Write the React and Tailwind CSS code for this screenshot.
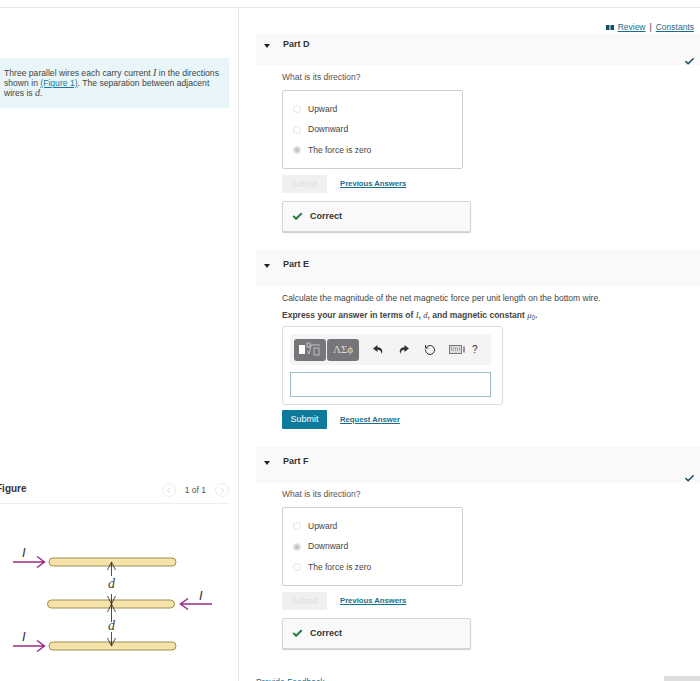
import { Check, ChevronLeft, ChevronRight, RotateCw } from 'lucide-react'

const sans = { fontFamily: '"Liberation Sans", Arial, sans-serif' }
const serif = { fontFamily: '"Liberation Serif", serif' }

function PartHeader({ label, className, check }) {
  return (
    <div className={`relative flex shrink-0 bg-[#f9f9f9] pl-[8px] ${className}`}>
      <span className="mt-[6px] h-0 w-0 border-x-[3.5px] border-t-[4px] border-x-transparent border-t-[#222]" />
      <span className="ml-[13px] text-[9px] leading-[12px] font-bold text-[#333]">{label}</span>
      {check && <Check size={11} strokeWidth={3.5} className={`absolute right-[5px] text-[#14506a] ${check}`} />}
    </div>
  )
}

function Radio({ label, selected }) {
  return (
    <div className="flex h-[20.5px] items-center">
      <span className={`flex h-[8px] w-[8px] items-center justify-center rounded-full border border-[#e6e6e6] ${selected ? 'bg-[#dcdcdc]' : 'bg-white'}`}>
        {selected && <span className="h-[4px] w-[4px] rounded-full bg-[#c4c4c4]" />}
      </span>
      <span className="ml-[7px] text-[8.5px] text-[#444]">{label}</span>
    </div>
  )
}

function MultipleChoice({ options, selected }) {
  return (
    <>
      <div className="text-[8.5px] leading-[12px] text-[#555]">What is its direction?</div>
      <div className="mt-[7px] flex h-[79px] w-[181px] flex-col justify-center rounded-[2px] border border-[#cfcfcf] pl-[10px]">
        {options.map(o => (
          <Radio key={o} label={o} selected={o === selected} />
        ))}
      </div>
      <div className="mt-[6px] flex items-center">
        <div className="flex h-[18px] w-[45px] items-center justify-center bg-[#f0f0f0] text-[8.5px] text-[#e0e0e0]">Submit</div>
        <a className="ml-[13px] text-[7.7px] font-bold text-[#1b6d8c] underline">Previous Answers</a>
      </div>
      <div className="mt-[8px] flex h-[31px] w-[189px] items-center rounded-[2px] border border-[#d6d6d6] bg-[#f9f9f9] pl-[9px] shadow-[0_1px_1px_#ccc]">
        <Check size={11} strokeWidth={4.5} className="text-[#2b8048]" />
        <span className="ml-[7px] text-[9px] font-bold text-[#333]">Correct</span>
      </div>
    </>
  )
}

function WireFigure() {
  return (
    <svg width="238" height="171" viewBox="0 0 238 171" className="mt-[6px] block shrink-0">
      <g fill="#f6e3aa" stroke="#a08c52" strokeWidth="1">
        <rect x="49" y="48" width="127" height="8" rx="4" />
        <rect x="47.5" y="90" width="127" height="8" rx="4" />
        <rect x="49" y="132" width="127" height="8" rx="4" />
      </g>
      <g fill="none" stroke="#9c2a8a" strokeWidth="1.5">
        <path d="M13 52H44M37 46.5L44.5 52L37 57.5" />
        <path d="M13 136H44M37 130.5L44.5 136L37 141.5" />
        <path d="M212 94H181M188 88.5L180.5 94L188 99.5" />
      </g>
      <g fill="none" stroke="#222" strokeWidth="0.8">
        <path d="M111.5 52V66M107.5 60L111.5 52L115.5 60" />
        <path d="M111.5 84V112M107.5 86L111.5 94L115.5 86M107.5 102L111.5 94L115.5 102" />
        <path d="M111.5 122V136M107.5 128L111.5 136L115.5 128" />
      </g>
      <g fontFamily='"Liberation Serif", serif' fontStyle="italic" fill="#444" fontSize="14">
        <text x="108" y="78">d</text>
        <text x="108" y="120">d</text>
      </g>
      <g fontFamily='"Liberation Sans", sans-serif' fontStyle="italic" fill="#333" fontSize="13">
        <text x="22" y="47">I</text>
        <text x="22" y="131">I</text>
        <text x="199" y="90">I</text>
      </g>
    </svg>
  )
}

function EditorToolbar() {
  return (
    <div className="flex h-[31px] items-center rounded-[3px] bg-[#f4f4f4] pl-[4px] text-[#333]">
      <div className="flex h-[22px] w-[32px] items-center justify-center gap-[1px] rounded-[3px] bg-[#76767a]">
        <span className="h-[9px] w-[6px] bg-white" />
        <svg width="15" height="15" viewBox="0 0 15 15" fill="none" stroke="#d5d5d5" strokeWidth="0.8">
          <rect x="1" y="1" width="3" height="4" />
          <path d="M1 9L3 12L5 3H14" />
          <rect x="8" y="6" width="5" height="7" />
        </svg>
      </div>
      <div className="ml-[1px] flex h-[22px] w-[32px] items-center justify-center rounded-[3px] bg-[#76767a] text-[11px] text-[#ddd]" style={serif}>
        ΛΣϕ
      </div>
      <svg width="10" height="9" viewBox="0 0 10 9" fill="#333" className="ml-[14px]">
        <path d="M4.5 0L0 3.5L4.5 7V4.7C7 4.7 8.2 6 8.6 9C10.3 5.5 8.8 2.3 4.5 2.2Z" />
      </svg>
      <svg width="10" height="9" viewBox="0 0 10 9" fill="#333" className="ml-[16px]">
        <path d="M5.5 0L10 3.5L5.5 7V4.7C3 4.7 1.8 6 1.4 9C-0.3 5.5 1.2 2.3 5.5 2.2Z" />
      </svg>
      <RotateCw size={12} strokeWidth={2} className="ml-[15px] -scale-x-100" />
      <svg width="17" height="9" viewBox="0 0 17 9" fill="none" stroke="#777" strokeWidth="1" className="ml-[13px]">
        <rect x="0.5" y="0.5" width="12" height="8" fill="#ddd" />
        <path d="M2 3H11M2 5H11" strokeDasharray="1 1" />
        <path d="M15 1.5V7.5" stroke="#333" />
      </svg>
      <span className="ml-[6px] text-[10px]">?</span>
    </div>
  )
}

export default function App() {
  return (
    <div className="flex h-[681px] w-[700px] overflow-hidden bg-white pt-[7px]" style={sans}>
      <aside className="flex w-[239px] shrink-0 flex-col border-t border-r border-[#e6e6e6]">
        <div className="mt-[50px] h-[50px] w-[229px] shrink-0 bg-[#e8f5f9] py-[10px] pl-[4px] text-[8.6px] leading-[10.2px] text-[#444]">
          Three parallel wires each carry current <i className="text-[10px] leading-[10px]" style={serif}>I</i> in the directions shown in <a className="text-[#1b7a9c] underline">(Figure 1)</a>. The separation between adjacent wires is <i className="text-[10px] leading-[10px]" style={serif}>d</i>.
        </div>

        <div className="mt-[372px] flex h-[24px] w-[229px] shrink-0 items-start justify-between border-b border-[#eee] pt-[2px]">
          <span className="-ml-[4px] text-[10px] leading-[14px] font-bold text-[#333]">Figure</span>
          <div className="flex items-center pt-[1px] text-[8.5px] text-[#555]">
            <span className="flex h-[14px] w-[14px] items-center justify-center rounded-full border border-[#eee]">
              <ChevronLeft size={9} className="text-[#ccc]" />
            </span>
            <span className="mx-[9px]">1 of 1</span>
            <span className="flex h-[14px] w-[14px] items-center justify-center rounded-full border border-[#eee]">
              <ChevronRight size={9} className="text-[#ccc]" />
            </span>
          </div>
        </div>
        <WireFigure />
      </aside>

      <main className="flex min-w-0 flex-1 flex-col border-t border-[#e6e6e6] pl-[17px]">
        <div className="mt-[12px] flex h-[14px] shrink-0 items-center justify-end pr-[6px] text-[8.5px] text-[#1b6d8c]">
          <svg width="8" height="5" viewBox="0 0 8 5" fill="#14506a" className="mr-[4px]">
            <rect width="3.5" height="5" />
            <rect x="4.5" width="3.5" height="5" />
          </svg>
          <a className="underline">Review</a>
          <span className="mx-[4px] text-[#333]">|</span>
          <a className="underline">Constants</a>
        </div>

        <PartHeader label="Part D" className="h-[31px] pt-[4px]" check="top-[22px]" />
        <div className="shrink-0 pt-[6px] pl-[26px]">
          <MultipleChoice options={['Upward', 'Downward', 'The force is zero']} selected="The force is zero" />
        </div>

        <PartHeader label="Part E" className="mt-[18px] h-[36px] pt-[8px]" />
        <div className="shrink-0 pt-[6px] pl-[26px]">
          <div className="text-[8.5px] leading-[12px] text-[#444]">Calculate the magnitude of the net magnetic force per unit length on the bottom wire.</div>
          <div className="mt-[5px] text-[8.5px] leading-[12px] font-bold text-[#444]">
            Express your answer in terms of <i className="font-normal" style={serif}>I</i>, <i className="font-normal" style={serif}>d</i>, and magnetic constant <i className="font-normal" style={serif}>μ</i><sub className="font-normal">0</sub>.
          </div>
          <div className="mt-[5px] h-[79px] w-[221px] rounded-[3px] border border-[#dcdcdc] pt-[7px] pr-[11px] pl-[7px]">
            <EditorToolbar />
            <div className="mt-[7px] h-[25px] border border-[#9dbcc9] bg-white" />
          </div>
          <div className="mt-[5px] flex items-center">
            <div className="flex h-[19px] w-[45px] items-center justify-center rounded-[1px] bg-[#0d7a9c] text-[9px] text-white">Submit</div>
            <a className="ml-[13px] text-[7.7px] font-bold text-[#1b6d8c] underline">Request Answer</a>
          </div>
        </div>

        <PartHeader label="Part F" className="mt-[18px] h-[36px] pt-[8px]" check="top-[26px]" />
        <div className="shrink-0 pt-[5px] pl-[26px]">
          <MultipleChoice options={['Upward', 'Downward', 'The force is zero']} selected="Downward" />
        </div>

        <div className="mt-[27px] flex shrink-0 items-start justify-between">
          <a className="text-[8.5px] leading-[12px] text-[#1b6d8c]">Provide Feedback</a>
          <span className="h-[6px] w-[36px] bg-[#dedede]" />
        </div>
      </main>
    </div>
  )
}
